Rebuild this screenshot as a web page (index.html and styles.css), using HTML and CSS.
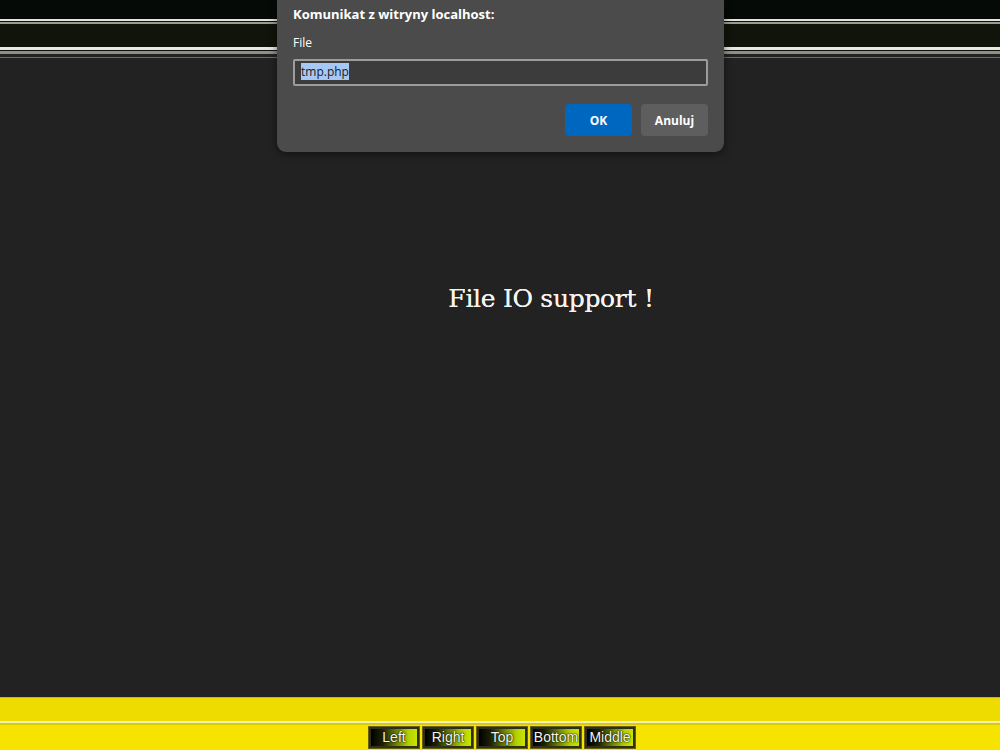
FILE: index.html
```html
<!DOCTYPE html>
<html>
<head>
<meta charset="utf-8">
<link rel="stylesheet" href="styles.css">
</head>
<body>
<div class="page">
  <header class="top">
    <div class="top-dark"></div>
    <div class="line light"></div>
    <div class="line gap"></div>
    <div class="line gray"></div>
    <div class="top-band"></div>
    <div class="line light2"></div>
    <div class="line gap"></div>
    <div class="line gray3"></div>
    <div class="top-gap"></div>
    <div class="line gray1"></div>
  </header>
  <main class="main">
    <h1 class="title">File IO support !</h1>
  </main>
  <footer class="bottom">
    <div class="bottom-band"></div>
    <div class="bline1"></div>
    <div class="bline2"></div>
    <div class="bar">
      <button class="tab">Left</button>
      <button class="tab">Right</button>
      <button class="tab">Top</button>
      <button class="tab">Bottom</button>
      <button class="tab">Middle</button>
    </div>
  </footer>
</div>
<div class="dialog">
  <div class="dlg-title">Komunikat z witryny localhost:</div>
  <div class="dlg-label">File</div>
  <div class="dlg-input"><span class="sel">tmp.php</span></div>
  <div class="dlg-buttons">
    <button class="btn ok">OK</button>
    <button class="btn cancel">Anuluj</button>
  </div>
</div>
</body>
</html>
```
FILE: styles.css
```css
html, body { margin: 0; padding: 0; }
body { background: #222222; width: 1000px; height: 750px; overflow: hidden; position: relative; }
.page { display: flex; flex-direction: column; height: 750px; }
.top { display: flex; flex-direction: column; }
.top-dark { height: 19px; background: #060a07; }
.line { height: 2px; }
.line.light { background: #e4e4de; }
.line.gap { height: 1px; background: #0e120a; }
.line.gray { background: #9a9c94; }
.top-band { height: 23px; background: #11140a; }
.line.light2 { height: 3px; background: #e8e8e2; }
.line.gray3 { height: 3px; background: #8e8f88; }
.top-gap { height: 3px; background: #222222; }
.line.gray1 { height: 1px; background: #6e6e68; }
.main { flex: 1; display: flex; justify-content: center; padding-left: 102px; }
.title { margin: 226px 0 0; font-family: "DejaVu Serif", "Liberation Serif", serif; font-weight: normal; font-size: 25px; color: #f4f4f0; letter-spacing: -0.3px; text-shadow: 0 0 0.6px #f4f4f0; }
.bottom { display: flex; flex-direction: column; }
.bottom-band { height: 23px; background: #eedb00; border-top: 1px solid #c8b800; }
.bline1 { height: 2px; background: #f6efb0; }
.bline2 { height: 2px; background: #d8ca10; }
.bar { height: 25px; background: #f6e400; display: flex; justify-content: center; gap: 4px; padding-top: 2px; padding-left: 4px; box-sizing: border-box; }
.tab { width: 50px; height: 21px; margin: 0; padding: 0; border: 2px solid #2e2e26; box-shadow: 0 0 0 1px #6a6000; background: linear-gradient(to right, #000000 0%, #1c2200 25%, #6a8200 55%, #b4d200 82%, #c8e400 100%); color: #f4f4f4; font-family: "Liberation Sans", Arial, sans-serif; font-size: 14px; line-height: 17px; text-shadow: 0 0 2px #000, 0 0 1px #000; }
.dialog { position: absolute; left: 277px; top: 0; width: 447px; height: 152px; background: #4b4b4b; border-radius: 0 0 9px 9px; box-shadow: 0 2px 8px rgba(0,0,0,0.5); font-family: "Open Sans", "Noto Sans", sans-serif; color: #ffffff; padding: 0 16px; box-sizing: border-box; }
.dlg-title { font-weight: bold; font-size: 13px; margin-top: 5px; line-height: 18px; }
.dlg-label { font-size: 12px; margin-top: 12px; line-height: 16px; }
.dlg-input { margin-top: 8px; height: 27px; border: 2px solid #9c9c9c; border-radius: 2px; background: #3c3c3c; box-sizing: border-box; padding: 3px 0 0 6px; font-size: 12px; line-height: 16px; }
.sel { background: #a6c8f4; color: #1a1a1a; }
.dlg-buttons { display: flex; justify-content: flex-end; gap: 9px; margin-top: 18px; }
.btn { width: 67px; height: 32px; border: none; border-radius: 4px; color: #fff; font-family: "Open Sans", "Noto Sans", sans-serif; font-weight: bold; font-size: 12px; }
.btn.ok { background: #0067c0; }
.btn.cancel { background: #5e5e5e; }
```
